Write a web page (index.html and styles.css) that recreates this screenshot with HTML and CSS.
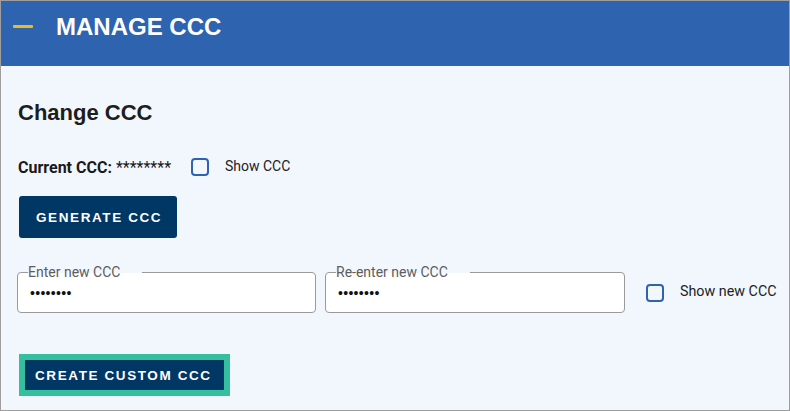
FILE: index.html
```html
<!DOCTYPE html>
<html lang="en">
<head>
<meta charset="utf-8">
<title>Manage CCC</title>
<link rel="stylesheet" href="styles.css">
</head>
<body>
<div class="page">
  <header class="bar">
    <span class="dash"></span>
    <h1 class="title">MANAGE CCC</h1>
  </header>
  <main class="content">
    <h2 class="heading">Change CCC</h2>
    <div class="current-row">
      <span class="current"><b>Current CCC:</b> ********</span>
      <span class="check"></span>
      <span class="check-label">Show CCC</span>
    </div>
    <button class="btn btn-generate">GENERATE CCC</button>
    <div class="fields">
      <div class="field field-a">
        <span class="field-label">Enter new CCC</span>
        <span class="field-value">••••••••</span>
      </div>
      <div class="field field-b">
        <span class="field-label">Re-enter new CCC</span>
        <span class="field-value">••••••••</span>
      </div>
      <span class="check check-new"></span>
      <span class="check-label">Show new CCC</span>
    </div>
    <button class="btn btn-create">CREATE CUSTOM CCC</button>
  </main>
</div>
</body>
</html>
```
FILE: styles.css
```css
* { box-sizing: border-box; }
html, body { margin: 0; padding: 0; }
body { width: 790px; height: 411px; overflow: hidden; font-family: Roboto, "Liberation Sans", sans-serif; }
.page {
  width: 790px; height: 411px;
  border: 1px solid #9e9e9e;
  background: #f2f7fe;
}
.bar {
  height: 65px;
  background: #2e63b0;
  display: flex;
  align-items: center;
  padding-bottom: 14px;
}
.dash {
  width: 20px; height: 3px;
  margin-left: 12px;
  background: #f2b81c;
  border-radius: 1px;
}
.title {
  margin: 0 0 0 23px;
  color: #fff;
  font-family: "Liberation Sans", Arial, sans-serif;
  font-weight: bold;
  font-size: 24px;
  line-height: 26px;
}
.content { padding: 0 0 0 17px; }
.heading {
  margin: 34px 0 0 0;
  font-family: "Liberation Sans", Arial, sans-serif;
  font-weight: bold;
  font-size: 22px;
  line-height: 26px;
  color: #1d1d1d;
}
.current-row {
  display: flex;
  align-items: center;
  margin-top: 31px;
  height: 20px;
}
.current { font-size: 16px; color: #1a1a1a; width: 173px; }
.current b { font-weight: bold; }
.check {
  width: 18px; height: 18px;
  border: 2px solid #2e63b0;
  border-radius: 4px;
  flex: none;
}
.check-label { margin: 0 0 3px 16px; font-size: 14px; color: #222; }
.fields .check-label { font-size: 14.3px; margin-bottom: 4px; }
.btn {
  display: block;
  border: none;
  background: #003764;
  color: #fff;
  font-family: "Liberation Sans", Arial, sans-serif;
  font-weight: bold;
  font-size: 13.5px;
  letter-spacing: 1.6px;
  text-align: left;
}
.btn-generate {
  margin: 19px 0 0 1px;
  width: 158px; height: 42px;
  border-radius: 3px;
  padding: 0 0 0 17px;
}
.fields {
  display: flex;
  align-items: center;
  margin: 34px 0 0 -1px;
}
.field {
  position: relative;
  height: 41px;
  background: #fff;
  border: 1px solid #9a9a9a;
  border-radius: 4px;
  padding: 10px 0 0 12px;
}
.field-a { width: 299px; }
.field-b { width: 300px; margin-left: 9px; }
.field-label {
  position: absolute;
  left: 10px; top: -9px;
  height: 17px;
  padding-right: 12px;
  font-size: 14px;
  line-height: 16px;
  color: #5d5d5d;
  background: linear-gradient(to bottom, #f2f7fe 0 9px, #fff 9px);
}
.field-label::after {
  content: "";
  position: absolute;
  right: -10px; top: 0;
  width: 10px; height: 9px;
  background: #f2f7fe;
}
.field-value {
  font-family: "Liberation Sans", Arial, sans-serif;
  font-size: 14px;
  line-height: 16px;
  color: #111;
  letter-spacing: 0.3px;
}
.check-new { margin-left: 21px; }
.btn-create {
  margin: 41px 0 0 1px;
  width: 211px; height: 42px;
  border: 6px solid #35bf9f;
  padding: 0 0 0 10px;
  letter-spacing: 1.6px;
}
```
